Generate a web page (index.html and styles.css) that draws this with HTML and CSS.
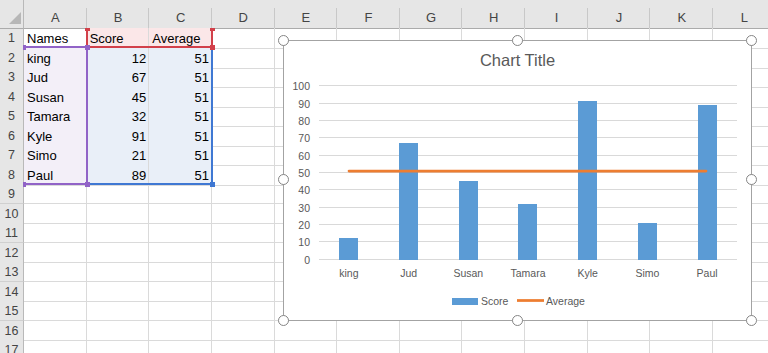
FILE: index.html
```html
<!DOCTYPE html>
<html lang="en">
<head>
    <meta charset="UTF-8">
    <title>Scores Chart</title>
    <link rel="stylesheet" href="styles.css">
</head>
<body>
<div class="sheet">
    <!-- Column headers -->
    <div class="row head">
        <div class="corner"></div>
        <div class="ch">A</div><div class="ch">B</div><div class="ch">C</div><div class="ch">D</div>
        <div class="ch">E</div><div class="ch">F</div><div class="ch">G</div><div class="ch">H</div>
        <div class="ch">I</div><div class="ch">J</div><div class="ch">K</div><div class="ch">L</div>
    </div>

    <!-- Data rows -->
    <div class="row">
        <div class="rh">1</div>
        <div class="cell">Names</div><div class="cell red">Score</div><div class="cell red">Average</div>
        <div class="cell"></div><div class="cell"></div><div class="cell"></div><div class="cell"></div>
        <div class="cell"></div><div class="cell"></div><div class="cell"></div><div class="cell"></div><div class="cell"></div>
    </div>
    <div class="row">
        <div class="rh">2</div>
        <div class="cell purple">king</div><div class="cell blue num">12</div><div class="cell blue num">51</div>
        <div class="cell"></div><div class="cell"></div><div class="cell"></div><div class="cell"></div>
        <div class="cell"></div><div class="cell"></div><div class="cell"></div><div class="cell"></div><div class="cell"></div>
    </div>
    <div class="row">
        <div class="rh">3</div>
        <div class="cell purple">Jud</div><div class="cell blue num">67</div><div class="cell blue num">51</div>
        <div class="cell"></div><div class="cell"></div><div class="cell"></div><div class="cell"></div>
        <div class="cell"></div><div class="cell"></div><div class="cell"></div><div class="cell"></div><div class="cell"></div>
    </div>
    <div class="row">
        <div class="rh">4</div>
        <div class="cell purple">Susan</div><div class="cell blue num">45</div><div class="cell blue num">51</div>
        <div class="cell"></div><div class="cell"></div><div class="cell"></div><div class="cell"></div>
        <div class="cell"></div><div class="cell"></div><div class="cell"></div><div class="cell"></div><div class="cell"></div>
    </div>
    <div class="row">
        <div class="rh">5</div>
        <div class="cell purple">Tamara</div><div class="cell blue num">32</div><div class="cell blue num">51</div>
        <div class="cell"></div><div class="cell"></div><div class="cell"></div><div class="cell"></div>
        <div class="cell"></div><div class="cell"></div><div class="cell"></div><div class="cell"></div><div class="cell"></div>
    </div>
    <div class="row">
        <div class="rh">6</div>
        <div class="cell purple">Kyle</div><div class="cell blue num">91</div><div class="cell blue num">51</div>
        <div class="cell"></div><div class="cell"></div><div class="cell"></div><div class="cell"></div>
        <div class="cell"></div><div class="cell"></div><div class="cell"></div><div class="cell"></div><div class="cell"></div>
    </div>
    <div class="row">
        <div class="rh">7</div>
        <div class="cell purple">Simo</div><div class="cell blue num">21</div><div class="cell blue num">51</div>
        <div class="cell"></div><div class="cell"></div><div class="cell"></div><div class="cell"></div>
        <div class="cell"></div><div class="cell"></div><div class="cell"></div><div class="cell"></div><div class="cell"></div>
    </div>
    <div class="row">
        <div class="rh">8</div>
        <div class="cell purple">Paul</div><div class="cell blue num">89</div><div class="cell blue num">51</div>
        <div class="cell"></div><div class="cell"></div><div class="cell"></div><div class="cell"></div>
        <div class="cell"></div><div class="cell"></div><div class="cell"></div><div class="cell"></div><div class="cell"></div>
    </div>

    <!-- Empty rows -->
    <div class="row">
        <div class="rh">9</div>
        <div class="cell"></div><div class="cell"></div><div class="cell"></div><div class="cell"></div>
        <div class="cell"></div><div class="cell"></div><div class="cell"></div><div class="cell"></div>
        <div class="cell"></div><div class="cell"></div><div class="cell"></div><div class="cell"></div>
    </div>
    <div class="row">
        <div class="rh">10</div>
        <div class="cell"></div><div class="cell"></div><div class="cell"></div><div class="cell"></div>
        <div class="cell"></div><div class="cell"></div><div class="cell"></div><div class="cell"></div>
        <div class="cell"></div><div class="cell"></div><div class="cell"></div><div class="cell"></div>
    </div>
    <div class="row">
        <div class="rh">11</div>
        <div class="cell"></div><div class="cell"></div><div class="cell"></div><div class="cell"></div>
        <div class="cell"></div><div class="cell"></div><div class="cell"></div><div class="cell"></div>
        <div class="cell"></div><div class="cell"></div><div class="cell"></div><div class="cell"></div>
    </div>
    <div class="row">
        <div class="rh">12</div>
        <div class="cell"></div><div class="cell"></div><div class="cell"></div><div class="cell"></div>
        <div class="cell"></div><div class="cell"></div><div class="cell"></div><div class="cell"></div>
        <div class="cell"></div><div class="cell"></div><div class="cell"></div><div class="cell"></div>
    </div>
    <div class="row">
        <div class="rh">13</div>
        <div class="cell"></div><div class="cell"></div><div class="cell"></div><div class="cell"></div>
        <div class="cell"></div><div class="cell"></div><div class="cell"></div><div class="cell"></div>
        <div class="cell"></div><div class="cell"></div><div class="cell"></div><div class="cell"></div>
    </div>
    <div class="row">
        <div class="rh">14</div>
        <div class="cell"></div><div class="cell"></div><div class="cell"></div><div class="cell"></div>
        <div class="cell"></div><div class="cell"></div><div class="cell"></div><div class="cell"></div>
        <div class="cell"></div><div class="cell"></div><div class="cell"></div><div class="cell"></div>
    </div>
    <div class="row">
        <div class="rh">15</div>
        <div class="cell"></div><div class="cell"></div><div class="cell"></div><div class="cell"></div>
        <div class="cell"></div><div class="cell"></div><div class="cell"></div><div class="cell"></div>
        <div class="cell"></div><div class="cell"></div><div class="cell"></div><div class="cell"></div>
    </div>
    <div class="row">
        <div class="rh">16</div>
        <div class="cell"></div><div class="cell"></div><div class="cell"></div><div class="cell"></div>
        <div class="cell"></div><div class="cell"></div><div class="cell"></div><div class="cell"></div>
        <div class="cell"></div><div class="cell"></div><div class="cell"></div><div class="cell"></div>
    </div>
    <div class="row">
        <div class="rh">17</div>
        <div class="cell"></div><div class="cell"></div><div class="cell"></div><div class="cell"></div>
        <div class="cell"></div><div class="cell"></div><div class="cell"></div><div class="cell"></div>
        <div class="cell"></div><div class="cell"></div><div class="cell"></div><div class="cell"></div>
    </div>

    <!-- Range highlights for the chart source data -->
    <div class="range range-blue">
        <span class="hd tl"></span><span class="hd tr"></span><span class="hd bl"></span><span class="hd br"></span>
    </div>
    <div class="range range-red">
        <span class="hd tl"></span><span class="hd tr"></span><span class="hd bl"></span><span class="hd br"></span>
    </div>
    <div class="range range-purple">
        <span class="hd tl"></span><span class="hd tr"></span><span class="hd bl"></span><span class="hd br"></span>
    </div>

    <!-- Chart object -->
    <div class="chart">
        <svg class="chart-svg" width="467" height="279" viewBox="0 0 467 279">
            <text class="title" x="233.5" y="25" text-anchor="middle">Chart Title</text>

            <g class="grid" stroke="#d9d9d9" stroke-width="1">
                <line x1="35" y1="44.5" x2="453" y2="44.5"/>
                <line x1="35" y1="62.5" x2="453" y2="62.5"/>
                <line x1="35" y1="79.5" x2="453" y2="79.5"/>
                <line x1="35" y1="96.5" x2="453" y2="96.5"/>
                <line x1="35" y1="114.5" x2="453" y2="114.5"/>
                <line x1="35" y1="131.5" x2="453" y2="131.5"/>
                <line x1="35" y1="148.5" x2="453" y2="148.5"/>
                <line x1="35" y1="166.5" x2="453" y2="166.5"/>
                <line x1="35" y1="183.5" x2="453" y2="183.5"/>
                <line x1="35" y1="200.5" x2="453" y2="200.5"/>
                <line x1="35" y1="218.5" x2="453" y2="218.5"/>
            </g>

            <g class="axis" text-anchor="end">
                <text x="26" y="48.5">100</text>
                <text x="26" y="66.5">90</text>
                <text x="26" y="83.5">80</text>
                <text x="26" y="100.5">70</text>
                <text x="26" y="118.5">60</text>
                <text x="26" y="135.5">50</text>
                <text x="26" y="152.5">40</text>
                <text x="26" y="170.5">30</text>
                <text x="26" y="187.5">20</text>
                <text x="26" y="204.5">10</text>
                <text x="26" y="222.5">0</text>
            </g>

            <g class="bars" fill="#5b9bd5">
                <rect x="55" y="197" width="19" height="22"/>
                <rect x="115" y="102" width="19" height="117"/>
                <rect x="175" y="140" width="19" height="79"/>
                <rect x="234" y="163" width="19" height="56"/>
                <rect x="294" y="60" width="19" height="159"/>
                <rect x="354" y="182" width="19" height="37"/>
                <rect x="414" y="64" width="19" height="155"/>
            </g>

            <line x1="65" y1="130" x2="422" y2="130" stroke="#ed7d31" stroke-width="2.75" stroke-linecap="round"/>

            <g class="axis" text-anchor="middle">
                <text x="64.9" y="236">king</text>
                <text x="124.6" y="236">Jud</text>
                <text x="184.3" y="236">Susan</text>
                <text x="244" y="236">Tamara</text>
                <text x="303.7" y="236">Kyle</text>
                <text x="363.4" y="236">Simo</text>
                <text x="423.1" y="236">Paul</text>
            </g>

            <g class="legend">
                <rect x="168" y="257" width="26" height="7" fill="#5b9bd5"/>
                <text x="197" y="263.5">Score</text>
                <line x1="233" y1="259.5" x2="260" y2="259.5" stroke="#ed7d31" stroke-width="2.75"/>
                <text x="262" y="263.5">Average</text>
            </g>
        </svg>

        <span class="knob k-tl"></span><span class="knob k-tm"></span><span class="knob k-tr"></span>
        <span class="knob k-ml"></span><span class="knob k-mr"></span>
        <span class="knob k-bl"></span><span class="knob k-bm"></span><span class="knob k-br"></span>
    </div>
</div>
</body>
</html>
```

FILE: styles.css
```css
/* Page */
body {
    margin: 0;
    background-color: #ffffff;
    font-family: 'Liberation Sans', Arial, sans-serif;
    color: #000;
    overflow: hidden;
}

/* Worksheet grid */
.sheet {
    position: relative;
    width: 768px;
    height: 353px;
    overflow: hidden;
}

.row {
    display: grid;
    grid-template-columns: 24px repeat(12, 62.65px);
    height: 19.5px;
}

.row.head {
    height: 28px;
}

/* Header cells */
.corner {
    position: relative;
    background-color: #e6e6e6;
    border-right: 1px solid #b9b9b9;
    border-bottom: 1px solid #ababab;
}

.corner::after {
    content: "";
    position: absolute;
    left: 9px;
    top: 12px;
    width: 12px;
    height: 12px;
    background-color: #b7b7b7;
    clip-path: polygon(100% 0, 100% 100%, 0 100%);
}

.ch {
    box-sizing: border-box;
    padding-top: 8px;
    line-height: 20px;
    font-size: 13px;
    text-align: center;
    color: #444;
    background: linear-gradient(#c8c8c8, #c8c8c8) right bottom / 1px 20px no-repeat, #e6e6e6;
    border-bottom: 1px solid #ababab;
}

.rh {
    box-sizing: border-box;
    padding-top: 2px;
    line-height: 17px;
    font-size: 12.5px;
    text-align: center;
    color: #444;
    background-color: #e6e6e6;
    border-right: 1px solid #b9b9b9;
    border-bottom: 1px solid #d0d0d0;
}

/* Body cells */
.cell {
    box-sizing: border-box;
    padding: 2px 3px 0;
    line-height: 18px;
    font-size: 13px;
    white-space: nowrap;
    border-right: 1px solid #dadada;
    border-bottom: 1px solid #dadada;
}

.cell.num {
    text-align: right;
    padding-right: 2px;
}

.cell.purple {
    background-color: #f3eff8;
}

.cell.red {
    background-color: #fbe7e8;
}

.cell.blue {
    background-color: #e9eff8;
}

/* Source data range outlines */
.range {
    position: absolute;
    box-sizing: border-box;
    border: 2px solid;
}

.range-blue {
    left: 86px;
    top: 46px;
    width: 127px;
    height: 139px;
    border-color: #3f78d3;
}

.range-red {
    left: 86px;
    top: 28px;
    width: 127px;
    height: 20px;
    border-color: #d2404a;
    border-top: none;
}

.range-purple {
    left: 23px;
    top: 46px;
    width: 65px;
    height: 139px;
    border-color: #9163c7;
    border-left: none;
}

.hd {
    position: absolute;
    width: 5px;
    height: 5px;
    background-color: inherit;
}

.range-blue .hd { background-color: #3f78d3; }
.range-red .hd { background-color: #d2404a; }
.range-purple .hd { background-color: #9163c7; }

.hd.tl { left: -3.5px; top: -3.5px; }
.hd.tr { right: -3.5px; top: -3.5px; }
.hd.bl { left: -3.5px; bottom: -3.5px; }
.hd.br { right: -3.5px; bottom: -3.5px; }

.range-red .hd.tl,
.range-red .hd.tr {
    top: 0;
    height: 3px;
}

.range-purple .hd.tl,
.range-purple .hd.bl {
    left: 0;
    width: 3px;
}

/* Chart */
.chart {
    position: absolute;
    left: 283px;
    top: 40px;
    box-sizing: border-box;
    width: 469px;
    height: 281px;
    background-color: #fff;
    border: 1px solid #a3a3a3;
}

.chart-svg {
    display: block;
    font-family: 'Liberation Sans', Arial, sans-serif;
}

.chart-svg .title {
    font-size: 16.5px;
    fill: #595959;
}

.chart-svg .axis,
.chart-svg .legend {
    font-size: 10.5px;
    fill: #595959;
}

/* Selection knobs */
.knob {
    position: absolute;
    box-sizing: border-box;
    width: 11px;
    height: 11px;
    border: 1.5px solid #858585;
    border-radius: 50%;
    background-color: #fff;
}

.k-tl { left: -6px; top: -6px; }
.k-tm { left: 228px; top: -6px; }
.k-tr { right: -6px; top: -6px; }
.k-ml { left: -6px; top: 133px; }
.k-mr { right: -6px; top: 133px; }
.k-bl { left: -6px; bottom: -6px; }
.k-bm { left: 228px; bottom: -6px; }
.k-br { right: -6px; bottom: -6px; }
```
